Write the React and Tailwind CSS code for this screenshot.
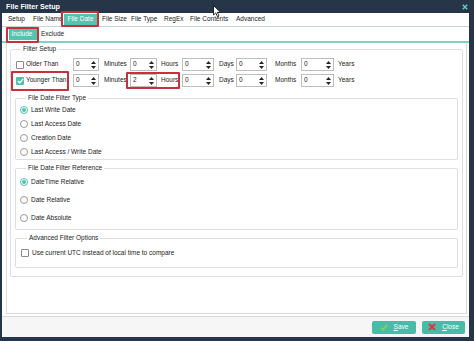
import React from "react";

const Spin = ({ w, v = "0" }) => (
  <div className={`h-[13px] ${w} border border-[#bdbdbd] bg-white flex items-center justify-between pl-[2px] pr-[2px] shrink-0`}>
    <span className="leading-none">{v}</span>
    <svg width="5" height="8" viewBox="0 0 5 8">
      <path d="M2.5 0 L5 3 L0 3 Z" fill="#222" />
      <path d="M0 5 L5 5 L2.5 8 Z" fill="#222" />
    </svg>
  </div>
);

const Check = ({ checked }) =>
  checked ? (
    <div className="w-[8px] h-[8px] rounded-[1px] bg-[#4fc1ad] flex items-center justify-center shrink-0">
      <svg width="7" height="6" viewBox="0 0 7 6">
        <path d="M0.8 3 L2.7 4.8 L6.2 1" stroke="white" strokeWidth="1.3" fill="none" />
      </svg>
    </div>
  ) : (
    <div className="w-[8px] h-[8px] rounded-[1px] border border-[#8a8a8a] bg-white shrink-0" />
  );

const Radio = ({ on }) =>
  on ? (
    <div className="w-[8px] h-[8px] rounded-full border border-[#4fc1ad] bg-white flex items-center justify-center shrink-0">
      <div className="w-[4px] h-[4px] rounded-full bg-[#4fc1ad]" />
    </div>
  ) : (
    <div className="w-[8px] h-[8px] rounded-full border border-[#9a9a9a] bg-white shrink-0" />
  );

const Legend = ({ children }) => (
  <legend className="ml-[6px] px-[2px] h-[8px] leading-[8px] text-[6.5px] text-[#222] whitespace-nowrap">{children}</legend>
);

const RadioRow = ({ on, label }) => (
  <div className="h-[10px] flex items-center gap-[3px]">
    <Radio on={on} />
    <span className="leading-none">{label}</span>
  </div>
);

const Label = ({ w, pl, children }) => (
  <span className={`${w} ${pl} leading-none shrink-0`}>{children}</span>
);

const Row = ({ younger }) => (
  <div className="h-[13px] flex items-center">
    <div className="w-[58px] shrink-0 flex items-center gap-[2px] pl-[1px] relative">
      <Check checked={younger} />
      <span className="leading-none">{younger ? "Younger Than" : "Older Than"}</span>
      {younger && (
        <div className="absolute left-[-4px] top-[-6px] w-[58px] h-[20px] border-2 border-[#c8303c] rounded-[1px]" />
      )}
    </div>
    <Spin w="w-[26px]" />
    <Label w="w-[31px]" pl="pl-[5px]">Minutes</Label>
    <div className="flex items-center relative">
      <Spin w="w-[27px]" v={younger ? "2" : "0"} />
      <Label w="w-[25px]" pl="pl-[4px]">Hours</Label>
      {younger && (
        <div className="absolute left-[-4px] top-[-2px] w-[54px] h-[17px] border-2 border-[#c8303c] rounded-[1px]" />
      )}
    </div>
    <Spin w="w-[32px]" />
    <Label w="w-[22px]" pl="pl-[5px]">Days</Label>
    <Spin w="w-[31px]" />
    <Label w="w-[34px]" pl="pl-[8px]">Months</Label>
    <Spin w="w-[33px]" />
    <Label w="" pl="pl-[4px]">Years</Label>
  </div>
);

export default function App() {
  const tabs = [
    ["Setup", "w-[25px]"],
    ["File Name", "w-[31px]"],
  ];
  const tabs2 = [
    ["File Size", "w-[29px]"],
    ["File Type", "w-[33px]"],
    ["RegEx", "w-[26px]"],
    ["File Contents", "w-[46px]"],
    ["Advanced", "w-[40px]"],
  ];
  return (
    <div className="w-[474px] h-[341px] bg-[#263548] flex flex-col relative overflow-hidden whitespace-nowrap font-['Liberation_Sans',Arial,sans-serif] text-[6.5px] text-[#222]">
      {/* title bar */}
      <div className="h-[13px] flex items-center justify-between pl-[6px] pr-[6px] shrink-0">
        <span className="text-white font-bold text-[7.2px] leading-none">File Filter Setup</span>
        <svg width="6" height="6" viewBox="0 0 6 6">
          <path d="M0.8 0.8 L5.2 5.2 M5.2 0.8 L0.8 5.2" stroke="#5fd0bd" strokeWidth="1.4" />
        </svg>
      </div>

      <div className="flex-1 flex flex-col ml-[2px] mr-[5px] mb-[4px] bg-white">
        {/* top tabs */}
        <div className="h-[14px] border-b border-[#cdd5d4] flex items-center pl-[3px] shrink-0">
          {tabs.map(([t, w]) => (
            <span key={t} className={`${w} pl-[3px] leading-none shrink-0`}>{t}</span>
          ))}
          <div className="w-[38px] h-[14px] relative flex items-center justify-center shrink-0">
            <div className="w-[33px] h-[11px] bg-[#55c3af] text-white flex items-center pl-[4px] leading-none">File Date</div>
            <div className="absolute left-[0px] top-[-2px] w-[38px] h-[16px] border-2 border-[#c8303c] rounded-[1px]" />
          </div>
          {tabs2.map(([t, w]) => (
            <span key={t} className={`${w} pl-[3px] leading-none shrink-0`}>{t}</span>
          ))}
        </div>

        {/* sub tabs */}
        <div className="h-[16px] border-b-2 border-[#7fd1c1] flex items-center pl-[4px] shrink-0">
          <div className="w-[33px] h-[14px] relative flex items-center justify-center shrink-0">
            <div className="w-[28px] h-[11px] bg-[#55c3af] text-white flex items-center pl-[3px] leading-none">Include</div>
            <div className="absolute left-0 top-0 w-[33px] h-[16px] border-2 border-[#c8303c] rounded-[1px]" />
          </div>
          <span className="pl-[2px] leading-none">Exclude</span>
        </div>

        {/* content panel */}
        <div className="flex-1 flex flex-col pl-[4px] pr-[2px]">
          <div className="flex-1 border-l border-r border-b border-[#d9d9d9] pl-[3px] pr-[3px] pt-[2px]">
            <fieldset className="border border-[#dedede] rounded-[2px] px-[4px] pb-[8px]">
              <Legend>Filter Setup</Legend>
              <div className="flex flex-col gap-[3px] pt-[5px]">
                <Row />
                <Row younger />
              </div>

              <fieldset className="mt-[7px] h-[66px] border border-[#dedede] rounded-[2px] pl-[4px]">
                <Legend>File Date Filter Type</Legend>
                <div className="flex flex-col gap-[4px] pt-[3px]">
                  <RadioRow on label="Last Write Date" />
                  <RadioRow label="Last Access Date" />
                  <RadioRow label="Creation Date" />
                  <RadioRow label="Last Access / Write Date" />
                </div>
              </fieldset>

              <fieldset className="mt-[4px] h-[66px] border border-[#dedede] rounded-[2px] pl-[4px]">
                <Legend>File Date Filter Reference</Legend>
                <div className="flex flex-col gap-[8px] pt-[5px]">
                  <RadioRow on label="DateTime Relative" />
                  <RadioRow label="Date Relative" />
                  <RadioRow label="Date Absolute" />
                </div>
              </fieldset>

              <fieldset className="mt-[4px] h-[34px] border border-[#dedede] rounded-[2px] pl-[5px]">
                <Legend>Advanced Filter Options</Legend>
                <div className="pt-[6px]">
                  <div className="h-[10px] flex items-center gap-[3px]">
                    <Check />
                    <span className="leading-none">Use current UTC instead of local time to compare</span>
                  </div>
                </div>
              </fieldset>
            </fieldset>
          </div>
          <div className="h-[2px] shrink-0" />
        </div>

        {/* footer */}
        <div className="h-[21px] shrink-0 bg-[#f6f6f6] border-t border-[#d9d9d9] flex items-center justify-end gap-[6px] pr-[4px]">
          <div className="w-[44px] h-[13px] bg-[#47bca9] rounded-[2px] flex items-center justify-center gap-[6px] text-white">
            <svg width="8" height="7" viewBox="0 0 8 7">
              <path d="M0.8 3.6 L3 5.8 L7.3 0.8" stroke="#8ad64a" strokeWidth="1.5" fill="none" />
            </svg>
            <span className="leading-none"><span className="underline">S</span>ave</span>
          </div>
          <div className="w-[43px] h-[13px] bg-[#47bca9] rounded-[2px] flex items-center justify-center gap-[6px] text-white">
            <svg width="8" height="8" viewBox="0 0 8 8">
              <path d="M1 1 L7 7 M7 1 L1 7" stroke="#e8323f" strokeWidth="2" />
            </svg>
            <span className="leading-none"><span className="underline">C</span>lose</span>
          </div>
        </div>
      </div>

      {/* mouse cursor */}
      <svg className="absolute left-[213px] top-[5px]" width="9" height="13" viewBox="0 0 9 13">
        <path d="M0.5 0.5 L0.5 10 L2.8 7.9 L4.5 11.8 L6 11.1 L4.4 7.3 L7.6 7.3 Z" fill="white" stroke="black" strokeWidth="0.8" />
      </svg>
    </div>
  );
}
